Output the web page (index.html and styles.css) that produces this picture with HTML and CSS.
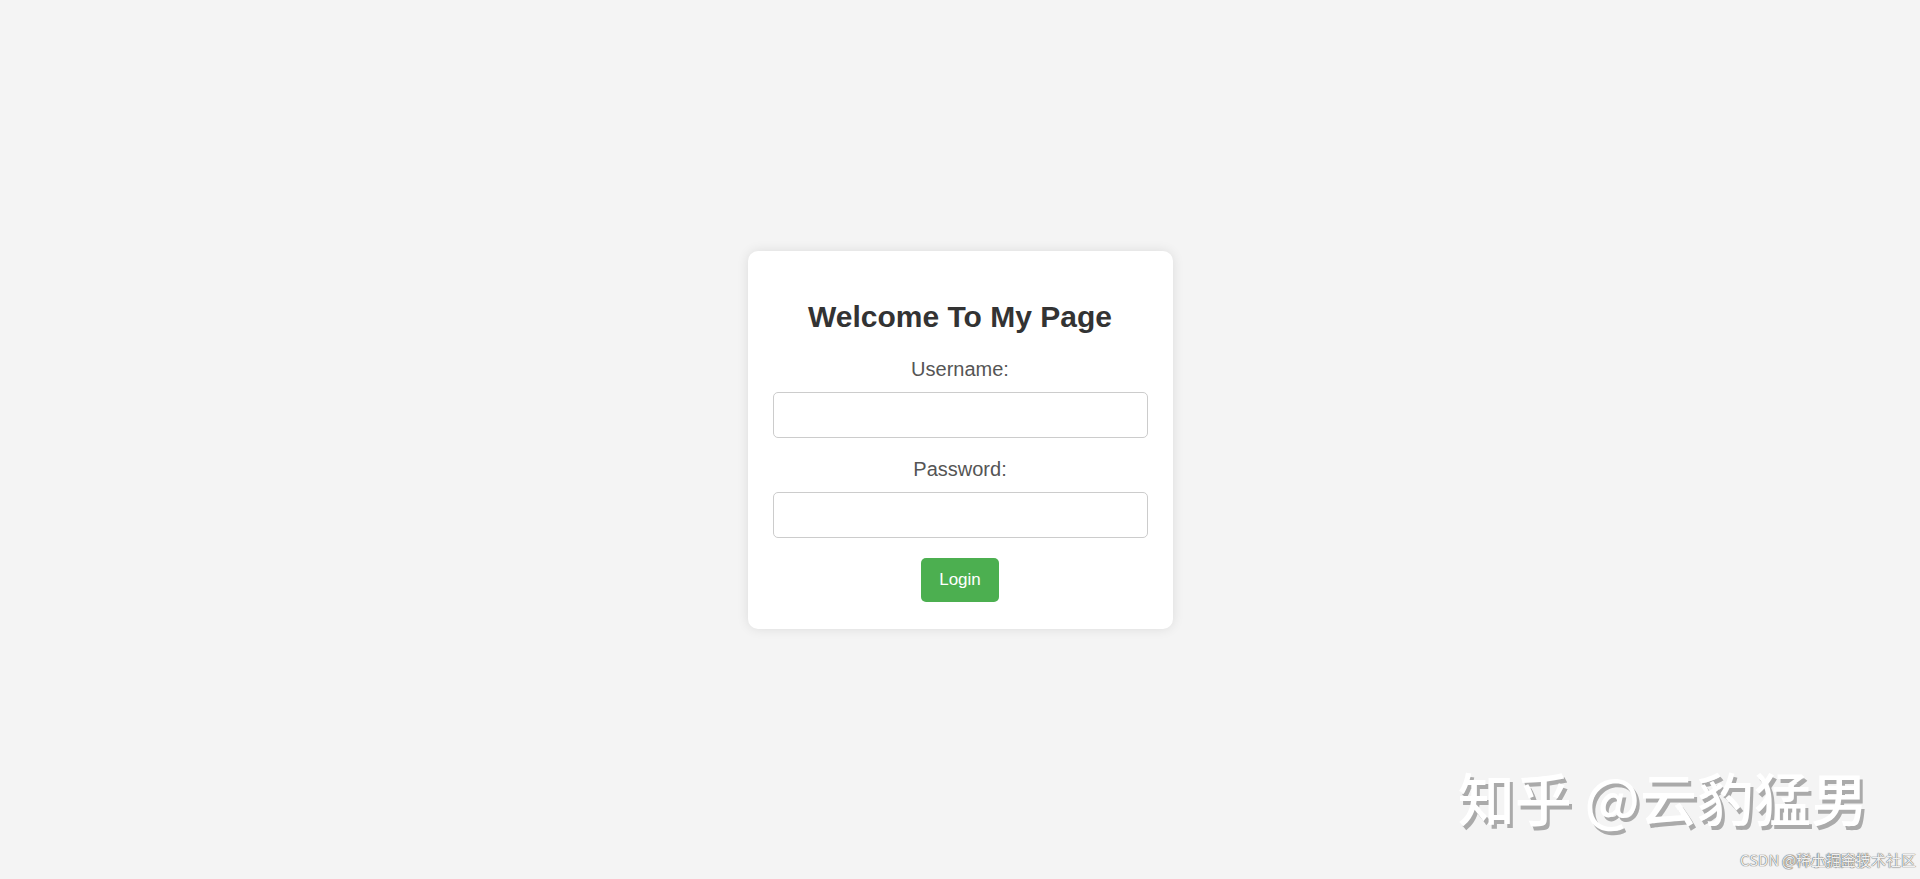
FILE: index.html
```html
<!DOCTYPE html>
<html>
<head>
    <title>Login</title>
    <meta name="viewport" content="width=device-width, initial-scale=1">
    <link rel="stylesheet" href="styles.css">
</head>
<body>

    <div class="login-box">
        <h2>Welcome To My Page</h2>
        <form>
            <label for="username">Username:</label>
            <input id="username" type="text">

            <label for="password">Password:</label>
            <input id="password" type="password">

            <button type="button" id="login">Login</button>
        </form>
    </div>

    <div class="mark">知乎 @云豹猛男</div>
    <div class="mark-small">
        <span class="under">CSDN @IT小辉同学</span>
        <span class="over">@稀土掘金技术社区</span>
    </div>

</body>
</html>
```

FILE: styles.css
```css
html, body {
    margin: 0;
}

body {
    font-family: "Liberation Sans", Arial, sans-serif;
    background-color: #f4f4f4;
    height: 100vh;
    display: flex;
    align-items: center;
    justify-content: center;
}

.login-box {
    width: 375px;
    padding: 25px 25px 27px;
    background-color: #fff;
    border-radius: 10px;
    box-shadow: 0 0 12px rgba(0, 0, 0, 0.1);
    text-align: center;
}

h2 {
    font-size: 30px;
    color: #333;
    margin: 24px 0;
}

form {
    display: flex;
    flex-direction: column;
    align-items: center;
}

label {
    display: block;
    font-size: 20px;
    color: #555;
    margin-bottom: 11px;
}

input[type="text"],
input[type="password"] {
    width: 100%;
    height: 46px;
    box-sizing: border-box;
    padding: 12px;
    margin: 0 0 20px;
    border: 1px solid #ccc;
    border-radius: 5px;
    font-size: 17px;
}

#login {
    width: 78px;
    height: 44px;
    padding: 0;
    background-color: #4caf50;
    color: #fff;
    border: none;
    border-radius: 5px;
    font-family: "Liberation Sans", Arial, sans-serif;
    font-size: 17px;
    cursor: pointer;
}

.mark {
    position: absolute;
    right: 52px;
    top: 762px;
    font-family: "Noto Sans CJK SC", sans-serif;
    font-size: 57px;
    font-weight: 500;
    line-height: 1.2;
    color: #fff;
    text-shadow: 3px 4px 0 #aaa;
    white-space: nowrap;
}

.mark-small {
    position: absolute;
    left: 1740px;
    top: 849px;
    width: 176px;
    height: 22px;
    font-family: "Noto Sans CJK SC", sans-serif;
    font-size: 15px;
    line-height: 22px;
    color: #f0f0f0;
    text-shadow: 0 0 1px #555, 0 0 1px #777;
    white-space: nowrap;
}

.mark-small span {
    position: absolute;
    top: 0;
}

.mark-small .under {
    left: 0;
}

.mark-small .over {
    right: 0;
}
```
